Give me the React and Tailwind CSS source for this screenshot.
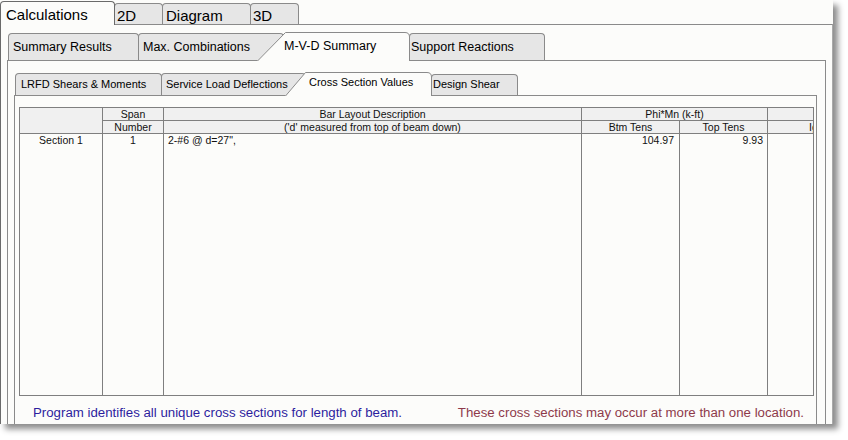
import React from "react";

const LINE = "border-[#8a8a8a]";

// selected tab with the slanted left edge, drawn as a small svg shape
const SlantTab = ({ label, width, height, slant, className, textClass }) => (
  <div
    className={`relative z-10 -mb-px shrink-0 ${className}`}
    style={{ width, height }}
  >
    <svg
      className="absolute inset-0"
      width={width}
      height={height}
      viewBox={`0 0 ${width} ${height}`}
    >
      <path
        d={`M0 ${height} L${slant + 0.5} 0.5 H${width - 5} Q${width - 0.5} 0.5 ${width - 0.5} 5 V${height} Z`}
        fill="#fcfcfa"
      />
      <path
        d={`M0.5 ${height} L${slant + 0.5} 0.5 H${width - 5} Q${width - 0.5} 0.5 ${width - 0.5} 5 V${height}`}
        fill="none"
        stroke="#8a8a8a"
      />
    </svg>
    <span className={`relative block whitespace-nowrap ${textClass}`}>{label}</span>
  </div>
);

const App = () => {
  return (
    <div className="w-[848px] h-[440px] bg-white font-['Liberation_Sans',Arial,sans-serif] text-black">
      <div className="w-[833px] h-[424px] bg-[#fcfcfa] flex flex-col overflow-hidden shadow-[5px_5px_6px_rgba(0,0,0,0.45)]">
        {/* top level tabs */}
        <div className="h-[24px] flex items-end shrink-0">
          <div className={`relative z-10 -mb-px h-[24px] w-[115px] shrink-0 border-l border-t border-r border-[#6a6a6a] rounded-t-[4px] bg-[#fcfcfa] pl-[5px] pt-[4px] text-[15px] leading-[17px]`}>
            Calculations
          </div>
          <div className={`-ml-px h-[21px] w-[49px] shrink-0 border-l border-t border-r ${LINE} rounded-t-[4px] bg-[#e6e6e6] pl-[2px] pt-[3px] text-[15px] leading-[17px] overflow-hidden`}>
            2D
          </div>
          <div className={`-ml-px h-[21px] w-[89px] shrink-0 border-l border-t border-r ${LINE} rounded-t-[4px] bg-[#e6e6e6] pl-[3px] pt-[3px] text-[15px] leading-[17px] overflow-hidden`}>
            Diagram
          </div>
          <div className={`-ml-px h-[21px] w-[49px] shrink-0 border-l border-t border-r ${LINE} rounded-t-[4px] bg-[#e6e6e6] pl-[2px] pt-[3px] text-[15px] leading-[17px] overflow-hidden`}>
            3D
          </div>
        </div>

        {/* top level panel */}
        <div className="flex-1 flex flex-col border-l border-t border-r border-l-[#6a6a6a] border-t-[#8a8a8a] border-r-[#a9a9a9] min-h-0">
          {/* second level tabs */}
          <div className="mt-[7px] mx-[6px] h-[28px] flex items-end shrink-0">
            <div className={`ml-px h-[27px] w-[131px] shrink-0 border-l border-t border-r ${LINE} rounded-t-[4px] bg-[#e6e6e6] pl-[4px] pt-[6px] text-[12.5px] leading-[15px] whitespace-nowrap`}>
              Summary Results
            </div>
            <div className={`-ml-px h-[27px] w-[146px] shrink-0 border-l border-t border-r ${LINE} rounded-t-[4px] bg-[#e6e6e6] pl-[4px] pt-[6px] text-[12.5px] leading-[15px] whitespace-nowrap`}>
              Max. Combinations
            </div>
            <SlantTab
              label="M-V-D Summary"
              width={153}
              height={29}
              slant={28}
              className="-ml-[27px]"
              textClass="pl-[27px] pt-[7px] text-[12.5px] leading-[15px]"
            />
            <div className={`-ml-px h-[27px] w-[136px] shrink-0 border-l border-t border-r ${LINE} rounded-t-[4px] bg-[#e6e6e6] pl-[1px] pt-[6px] text-[12.5px] leading-[15px] whitespace-nowrap`}>
              Support Reactions
            </div>
          </div>

          {/* second level panel */}
          <div className={`flex-1 mx-[6px] flex flex-col border-l border-t border-r ${LINE} min-h-0`}>
            {/* third level tabs */}
            <div className="mt-[11px] ml-[6px] h-[23px] flex items-end shrink-0">
              <div className={`ml-px h-[22px] w-[147px] shrink-0 border-l border-t border-r ${LINE} rounded-t-[4px] bg-[#e6e6e6] pl-[5px] pt-[4px] text-[11px] leading-[13px] whitespace-nowrap`}>
                LRFD Shears &amp; Moments
              </div>
              <div className={`-ml-px h-[22px] w-[145px] shrink-0 border-l border-t border-r ${LINE} rounded-t-[4px] bg-[#e6e6e6] pl-[4px] pt-[4px] text-[11px] leading-[13px] whitespace-nowrap`}>
                Service Load Deflections
              </div>
              <SlantTab
                label="Cross Section Values"
                width={147}
                height={24}
                slant={20}
                className="-ml-[21px]"
                textClass="pl-[24px] pt-[4px] text-[11px] leading-[13px]"
              />
              <div className={`-ml-px h-[21px] w-[87px] shrink-0 border-l border-t border-r ${LINE} rounded-t-[4px] bg-[#e6e6e6] pl-[1px] pt-[3px] text-[11px] leading-[13px] whitespace-nowrap`}>
                Design Shear
              </div>
            </div>

            {/* third level panel */}
            <div className={`flex-1 ml-[6px] mr-[8px] flex flex-col border-l border-t border-r ${LINE} min-h-0`}>
              {/* grid */}
              <div className="mt-[11px] ml-[4px] h-[289px] w-[795px] shrink-0 flex overflow-hidden border border-[#7f7f7f] text-[10.5px] leading-[12px] text-[#111]">
                <div className="w-[83px] shrink-0 border-r border-[#7f7f7f]">
                  <div className="h-[26px] border-b border-[#7f7f7f] bg-[#f0f0f0]" />
                  <div className="h-[13px] text-center">Section 1</div>
                </div>
                <div className="w-[61px] shrink-0 border-r border-[#7f7f7f]">
                  <div className="h-[13px] border-b border-[#7f7f7f] bg-[#f0f0f0] text-center">Span</div>
                  <div className="h-[13px] border-b border-[#7f7f7f] bg-[#f0f0f0] text-center">Number</div>
                  <div className="h-[13px] text-center">1</div>
                </div>
                <div className="w-[418px] shrink-0 border-r border-[#7f7f7f]">
                  <div className="h-[13px] border-b border-[#7f7f7f] bg-[#f0f0f0] text-center">Bar Layout Description</div>
                  <div className="h-[13px] border-b border-[#7f7f7f] bg-[#f0f0f0] text-center">('d' measured from top of beam down)</div>
                  <div className="h-[13px] pl-[4px] whitespace-nowrap">2-#6 @ d=27",</div>
                </div>
                <div className="w-[186px] shrink-0 flex flex-col border-r border-[#7f7f7f]">
                  <div className="h-[13px] shrink-0 border-b border-[#7f7f7f] bg-[#f0f0f0] text-center">Phi*Mn (k-ft)</div>
                  <div className="flex-1 flex">
                    <div className="w-[98px] shrink-0 border-r border-[#7f7f7f]">
                      <div className="h-[13px] border-b border-[#7f7f7f] bg-[#f0f0f0] text-center">Btm Tens</div>
                      <div className="h-[13px] pr-[5px] text-right">104.97</div>
                    </div>
                    <div className="flex-1">
                      <div className="h-[13px] border-b border-[#7f7f7f] bg-[#f0f0f0] text-center">Top Tens</div>
                      <div className="h-[13px] pr-[4px] text-right">9.93</div>
                    </div>
                  </div>
                </div>
                <div className="w-[110px] shrink-0 border-r border-[#7f7f7f]">
                  <div className="h-[13px] border-b border-[#7f7f7f] bg-[#f0f0f0]" />
                  <div className="h-[13px] border-b border-[#7f7f7f] bg-[#f0f0f0] pl-[41px] whitespace-nowrap">Ig (in4)</div>
                </div>
              </div>

              {/* notes */}
              <div className="mt-[9px] pl-[18px] pr-[12px] flex justify-between text-[13.25px] leading-[16px] whitespace-nowrap">
                <span className="text-[#2c1d9e]">Program identifies all unique cross sections for length of beam.</span>
                <span className="text-[#8e3a4a]">These cross sections may occur at more than one location.</span>
              </div>
            </div>
          </div>
        </div>
      </div>
    </div>
  );
};

export default App;
